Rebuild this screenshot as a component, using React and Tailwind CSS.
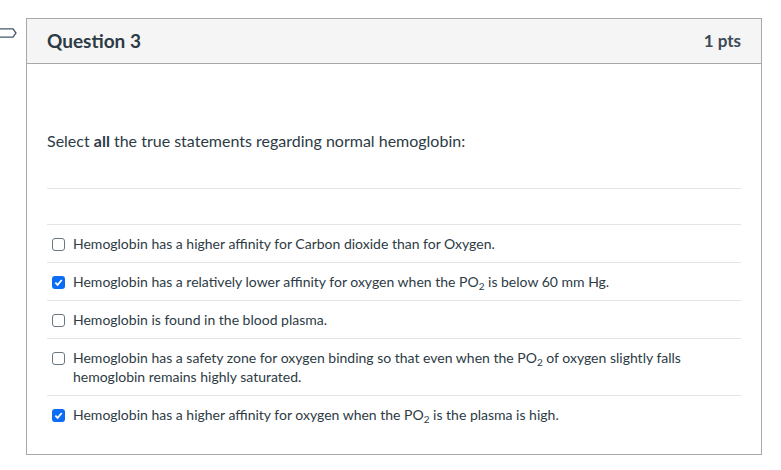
import React from 'react';

const options = [
  { checked: false, text: <>Hemoglobin has a higher affinity for Carbon dioxide than for Oxygen.</> },
  { checked: true, text: <>Hemoglobin has a relatively lower affinity for oxygen when the PO<sub className="text-[10px]">2</sub> is below 60 mm Hg.</> },
  { checked: false, text: <>Hemoglobin is found in the blood plasma.</> },
  { checked: false, text: <>Hemoglobin has a safety zone for oxygen binding so that even when the PO<sub className="text-[10px]">2</sub> of oxygen slightly falls<br />hemoglobin remains highly saturated.</> },
  { checked: true, text: <>Hemoglobin has a higher affinity for oxygen when the PO<sub className="text-[10px]">2</sub> is the plasma is high.</> },
];

function Box({ checked }) {
  if (checked) {
    return (
      <span className="mt-[4px] w-[13px] h-[13px] rounded-[3px] bg-[#0b6cf5] flex items-center justify-center shrink-0">
        <svg width="9" height="9" viewBox="0 0 10 10">
          <path d="M1.5 5.2 L4 7.6 L8.6 2.2" fill="none" stroke="white" strokeWidth="2" />
        </svg>
      </span>
    );
  }
  return <span className="mt-[4px] w-[13px] h-[13px] rounded-[3px] border border-[#6b7780] bg-white shrink-0" />;
}

export default function App() {
  return (
    <div className="bg-white min-h-[470px] pt-[18px] flex text-[#2d3b45]" style={{ fontFamily: 'Lato, "Noto Sans", sans-serif' }}>
      <div className="w-[26px] pt-[10px]">
        <svg width="18" height="10" viewBox="0 0 18 10">
          <path d="M-1 0.8 H13 L16 5 L13 9.2 H-1" fill="none" stroke="#44586a" strokeWidth="1.3" />
        </svg>
      </div>
      <div className="w-[736px] h-[437px] border border-[#a8a8a8] flex flex-col">
        <div className="h-[45px] bg-[#f5f5f5] border-b border-[#a8a8a8] flex items-center justify-between px-[20px]">
          <span className="text-[19px] font-bold">Question 3</span>
          <span className="text-[17px] font-bold text-[#3b4a55]">1 pts</span>
        </div>
        <div className="px-[20px]">
          <div className="pt-[65px] pb-[35px] border-b border-[#e2e4e6] text-[16px] leading-[24px]">
            Select <b>all</b> the true statements regarding normal hemoglobin:
          </div>
          <div className="mt-[35px] border-t border-[#e2e4e6]">
            {options.map((o, i) => (
              <div key={i} className={`flex gap-[8px] pl-[5px] py-[9px] text-[14px] leading-[19px] ${i < options.length - 1 ? 'border-b border-[#e2e4e6]' : ''}`}>
                <Box checked={o.checked} />
                <div className="[&_sub]:leading-none">{o.text}</div>
              </div>
            ))}
          </div>
        </div>
      </div>
    </div>
  );
}
